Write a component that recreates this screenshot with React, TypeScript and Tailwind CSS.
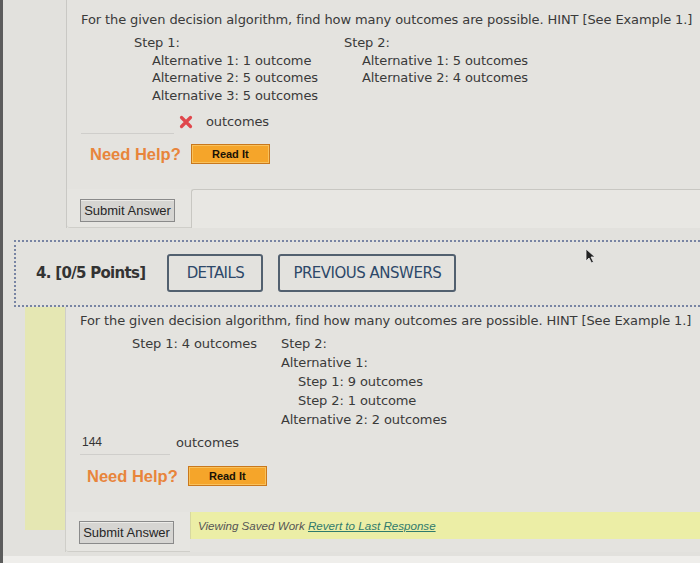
import React from "react";

const verdana = { fontFamily: '"DejaVu Sans", Verdana, sans-serif' };

function ReadIt() {
  return (
    <div className="flex h-[20px] w-[79px] items-center justify-center border border-[#c9781c] bg-[#f5a52a] shadow-[inset_0_0_0_1px_#f8c15c]">
      <span className="text-[11px] font-bold text-[#1a1206] [font-family:'Liberation_Sans',Arial,sans-serif]">Read It</span>
    </div>
  );
}

function NeedHelp({ ml }: { ml: string }) {
  return (
    <div className={`flex h-[20px] items-center ${ml}`}>
      <span className="text-[16.5px] font-bold leading-none text-[#e8853b] [font-family:'Liberation_Sans',Arial,sans-serif]">Need Help?</span>
      <div className="ml-[10px]">
        <ReadIt />
      </div>
    </div>
  );
}

function SubmitBtn() {
  return (
    <div className="flex h-[23px] w-[95px] items-center justify-center border border-[#8a8a8a] bg-[#d6d5d2] shadow-[inset_0_1px_0_#ecebe8]">
      <span className="text-[13px] text-[#262626] [font-family:'Liberation_Sans',Arial,sans-serif]">Submit Answer</span>
    </div>
  );
}

export default function App() {
  return (
    <div className="flex h-[563px] w-[700px] overflow-hidden bg-[#e2e1dd] text-[#3a3a3a]" style={verdana}>
      <div className="w-[3px] shrink-0 bg-[#5c5c5c]" />
      <div className="flex min-w-0 flex-1 flex-col">
        {/* Top card */}
        <div className="ml-[63px] flex flex-col border-l border-[#c9c8c4] bg-[#e4e3df]">
          <div className="pl-[14px] pt-[11px] text-[13px] leading-[18px] tracking-[-0.1px]">
            <div className="whitespace-nowrap">For the given decision algorithm, find how many outcomes are possible. HINT [See Example 1.]</div>
            <div className="mt-[5px] flex leading-[17.7px]">
              <div className="ml-[53px] w-[210px]">
                <div>Step 1:</div>
                <div className="pl-[18px]">Alternative 1: 1 outcome</div>
                <div className="pl-[18px]">Alternative 2: 5 outcomes</div>
                <div className="pl-[18px]">Alternative 3: 5 outcomes</div>
              </div>
              <div>
                <div>Step 2:</div>
                <div className="pl-[18px]">Alternative 1: 5 outcomes</div>
                <div className="pl-[18px]">Alternative 2: 4 outcomes</div>
              </div>
            </div>
            <div className="mt-[5px] flex h-[24px] items-center">
              <div className="h-[24px] w-[93px] border-b border-[#cfcecb]" />
              <svg width="14" height="14" viewBox="0 0 14 14" className="ml-[5px]">
                <path d="M2.5 2.5 L11.5 11.5 M11.5 2.5 L2.5 11.5" stroke="#e0474c" strokeWidth="3.2" strokeLinecap="round" />
              </svg>
              <span className="ml-[13px]">outcomes</span>
            </div>
          </div>
          <NeedHelp ml="ml-[23px] mt-[10px]" />
          <div className="mt-[25px] flex h-[39px]">
            <div className="w-[124px] rounded-bl-[3px] border-b border-[#cfcec9] bg-[#e6e5e1] pl-[13px] pt-[10px]">
              <SubmitBtn />
            </div>
            <div className="flex-1 rounded-tl-[3px] border-l border-t border-[#c8c7c2] bg-[#e8e7e3]" />
          </div>
        </div>

        {/* Question 4 header */}
        <div className="ml-[11px] mt-[12px] flex h-[67px] items-center border-2 border-r-0 border-dotted border-[#7884a3] bg-[#e3e2de]">
          <span className="ml-[20px] text-[15px] font-bold tracking-[-0.7px] text-[#333]">4. [0/5 Points]</span>
          <div className="ml-[22px] flex h-[38px] w-[96px] items-center justify-center rounded-[3px] border-2 border-[#52606f] text-[15px] tracking-[-0.6px] text-[#2d4869]">
            DETAILS
          </div>
          <div className="ml-[15px] flex h-[38px] w-[178px] items-center justify-center rounded-[3px] border-2 border-[#52606f] text-[15px] tracking-[-0.5px] text-[#2d4869]">
            PREVIOUS ANSWERS
          </div>
          <svg width="12" height="16" viewBox="0 0 12 16" className="ml-[129px] -mt-[34px]">
            <path d="M1 1 L1 13 L4 10 L6.5 15 L8.5 14 L6 9 L10 9 Z" fill="#222" stroke="#eee" strokeWidth="0.8" />
          </svg>
        </div>

        {/* Question 4 body */}
        <div className="flex">
          <div className="ml-[22px] h-[223px] w-[40px] shrink-0 bg-[#e5e7b3]" />
          <div className="flex flex-1 flex-col border-l border-[#cfcec9] bg-[#e4e3df]">
            <div className="pl-[14px] pt-[5px] text-[13px] leading-[18px] tracking-[-0.1px]">
              <div className="whitespace-nowrap">For the given decision algorithm, find how many outcomes are possible. HINT [See Example 1.]</div>
              <div className="mt-[4px] flex leading-[19px]">
                <div className="ml-[52px] w-[149px]">Step 1: 4 outcomes</div>
                <div>
                  <div>Step 2:</div>
                  <div>Alternative 1:</div>
                  <div className="pl-[17px]">Step 1: 9 outcomes</div>
                  <div className="pl-[17px]">Step 2: 1 outcome</div>
                  <div>Alternative 2: 2 outcomes</div>
                </div>
              </div>
              <div className="mt-[2px] flex h-[24px] items-center">
                <div className="flex h-[24px] w-[90px] items-center border-b border-[#cfcecb] pl-[2px] text-[12px] text-[#333] [font-family:'Liberation_Sans',Arial,sans-serif] tracking-normal">
                  144
                </div>
                <span className="ml-[6px]">outcomes</span>
              </div>
            </div>
            <NeedHelp ml="ml-[21px] mt-[11px]" />
            <div className="mt-[26px] flex h-[40px]">
              <div className="flex w-[124px] items-end rounded-bl-[3px] border-b border-[#cfcec9] bg-[#e6e5e1] pb-[7px] pl-[13px]">
                <SubmitBtn />
              </div>
              <div className="flex-1">
                <div className="flex h-[27px] items-center border-l border-[#d7d8a0] bg-[#eceea6] pl-[7px] text-[11.6px] italic text-[#555] [font-family:'Liberation_Sans',Arial,sans-serif]">
                  Viewing Saved Work&nbsp;<span className="text-[#2f7a6c] underline">Revert to Last Response</span>
                </div>
              </div>
            </div>
          </div>
        </div>
        <div className="flex-1" />
        <div className="h-[7px] bg-[#efeeeb]" />
      </div>
    </div>
  );
}
